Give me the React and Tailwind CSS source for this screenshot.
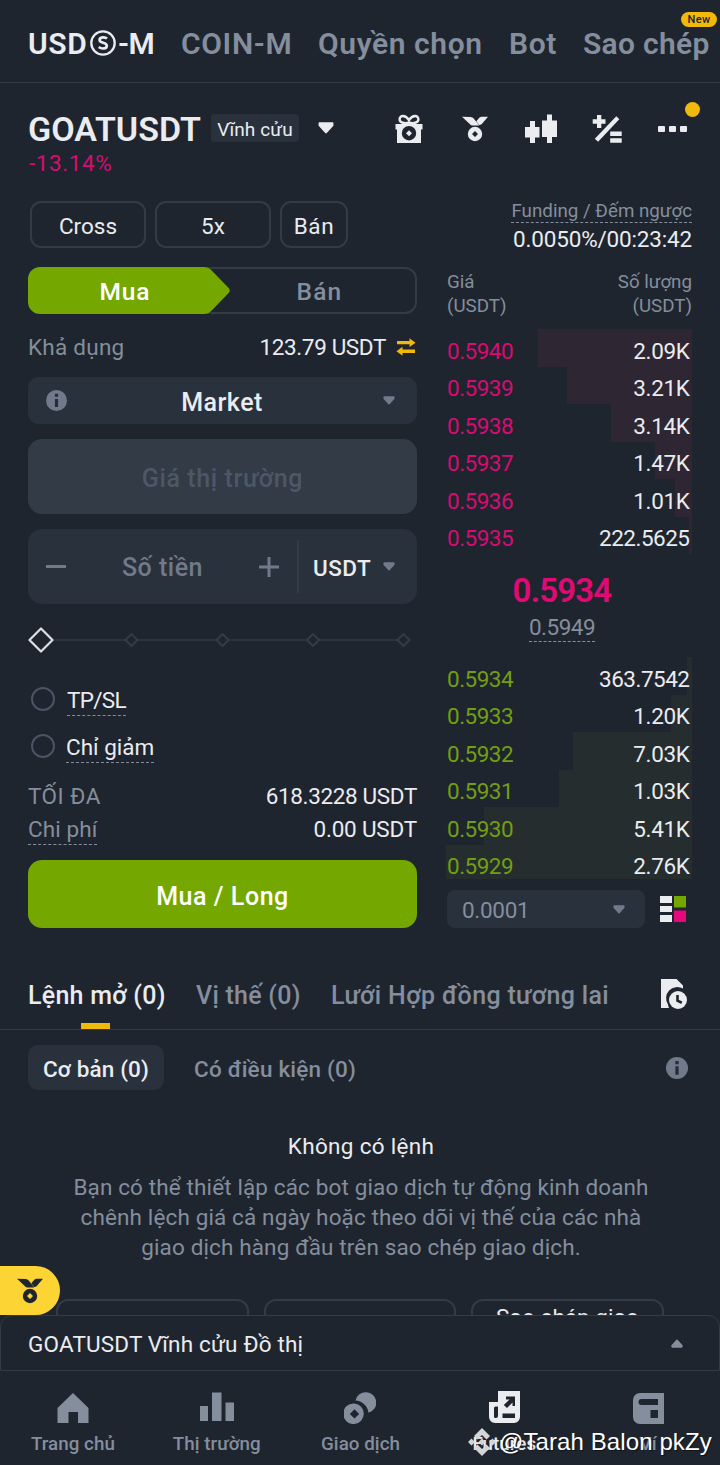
import React from "react";

const asks = [
  { price: "0.5940", size: "2.09K", depth: 154 },
  { price: "0.5939", size: "3.21K", depth: 125 },
  { price: "0.5938", size: "3.14K", depth: 81 },
  { price: "0.5937", size: "1.47K", depth: 37 },
  { price: "0.5936", size: "1.01K", depth: 17 },
  { price: "0.5935", size: "222.5625", depth: 3 },
];

const bids = [
  { price: "0.5934", size: "363.7542", depth: 5 },
  { price: "0.5933", size: "1.20K", depth: 21 },
  { price: "0.5932", size: "7.03K", depth: 119 },
  { price: "0.5931", size: "1.03K", depth: 133 },
  { price: "0.5930", size: "5.41K", depth: 208 },
  { price: "0.5929", size: "2.76K", depth: 246 },
];

function Caret({ className }) {
  return (
    <svg viewBox="0 0 16 12" className={className} fill="currentColor">
      <path d="M.6 1.2C.6.6 1 .2 1.600 .2h12.800c.6 0 1 .4 1 1v2.500L8.800 11a1.100 1.100 0 0 1-1.600 0L.6 3.700z" />
    </svg>
  );
}

function InfoIcon({ className }) {
  return (
    <svg viewBox="0 0 24 24" className={className}>
      <circle cx="12" cy="12" r="12" fill="#707a8a" />
      <path d="M10.200 4.300h3.600v3.500h-3.600zM10.200 10.200h3.600v9.200h-3.600z" fill="#262d39" />
    </svg>
  );
}

function GiftIcon() {
  return (
    <svg viewBox="0 0 28 30" className="h-[30px] w-7" fill="#eaecef">
      <path d="M14 8.500C10 9.800 4.600 9 4.600 5.200 4.600 1 10.500.6 14 6.200 17.500.6 23.400 1 23.400 5.200 23.400 9 18 9.800 14 8.500z" fill="none" stroke="#eaecef" strokeWidth="2.400" />
      <path fillRule="evenodd" d="M.5 10h27v5.500H26V29H2V15.500H.5zM14 12a7.200 7.200 0 1 0 0 14.400 7.200 7.200 0 0 0 0-14.400z" />
      <path d="M14 16.200l3 3-3 3-3-3z" />
    </svg>
  );
}

function MedalIcon({ className }) {
  return (
    <svg viewBox="0 0 28 26" className={className} fill="currentColor">
      <path d="M1 .8l8.500.2c1.500.1 2.500.7 3.400 1.800l5.400 6.600h-6.900c-1 0-1.800-.4-2.400-1.200z" />
      <path d="M27 .8l-6 6.900c-.7.8-1.700 1.300-2.900 1.200L15.300 5.300l2.600-3c.8-1 1.900-1.500 3.100-1.500z" />
      <path fillRule="evenodd" d="M14 10.800a7.200 7.200 0 1 0 0 14.400 7.200 7.200 0 0 0 0-14.400zM14 15l3 3-3 3-3-3z" />
    </svg>
  );
}

function CandleIcon() {
  return (
    <svg viewBox="0 0 32 30" className="h-[30px] w-8" fill="#eaecef">
      <path d="M5 7h5v6h4.500v10.500H10V29H5v-5.500H0V13h5zM22 .5h5v6h5V23h-5v6h-5v-6h-5V6.500h5z" />
    </svg>
  );
}

function PercentIcon() {
  return (
    <svg viewBox="0 0 30 30" className="h-[30px] w-[30px]" fill="#eaecef">
      <path d="M5 1h4.300v4.300h4.200v4.400H9.300V14H5V9.700H.7V5.300H5zM24.300 2.300l3 3L6.100 27.800l-3.300-3zM18.200 17.600h11.500v4.300H18.200zM18.200 24.300h11.500v4.400H18.200z" />
    </svg>
  );
}

function BookIcon() {
  return (
    <svg viewBox="0 0 26 26" className="h-[26px] w-[26px]">
      <path d="M0 0h12v7H0zM0 10h12v6H0zM0 19h12v7H0z" fill="#eaecef" />
      <path d="M14 0h12v11.500H14z" fill="#74a800" />
      <path d="M14 14.500h12V26H14z" fill="#e8077d" />
    </svg>
  );
}

function HistoryIcon() {
  return (
    <svg viewBox="0 0 27 30" className="h-[30px] w-[27px]">
      <path d="M0 0h15.500L22 6.500V9.600A11.200 11.200 0 0 0 7 25.500c.2 1.300.5 2.400 1 3.500H0z" fill="#eaecef" />
      <circle cx="17" cy="21" r="9" fill="#eaecef" />
      <path d="M16.500 16v5.700l4.300 2" fill="none" stroke="#1f252f" strokeWidth="2.600" />
    </svg>
  );
}

function Outline({ children, className }) {
  return (
    <div className={`flex h-[47px] items-center justify-center rounded-[11px] border-2 border-[#333b47] pt-1 text-[22.5px] ${className}`}>
      {children}
    </div>
  );
}

function BookRow({ row, side }) {
  const ask = side === "ask";
  return (
    <div className="grid h-[37.5px] grid-rows-[37.5px]">
      <div className="flex justify-end [grid-area:1/1]">
        <div className={ask ? "bg-[#2f2633]" : "bg-[#252d2e]"} style={{ width: row.depth }} />
      </div>
      <div className="flex h-[44px] items-center justify-between pl-px pr-[2.5px] text-[22.5px] tracking-[-0.5px] [grid-area:1/1]">
        <span className={ask ? "text-[#d60c72]" : "text-[#729f11]"}>{row.price}</span>
        <span className={row.size.length > 5 ? "" : "tracking-[-0.35px]"}>{row.size}</span>
      </div>
    </div>
  );
}

function Header() {
  return (
    <header className="flex h-[83px] border-b border-[#333b47] pl-7 pt-[25px] text-[30px] font-semibold leading-[38px] text-[#848e9c]">
      <div className="flex h-[38px] w-[153px] items-center tracking-[0.6px] text-[#eaecef]">
        <span className="w-[62px]">USD</span>
        <svg viewBox="0 0 26 26" className="-mt-0.5 h-[26px] w-[26px]">
          <circle cx="13" cy="13" r="11.700" fill="none" stroke="#eaecef" strokeWidth="2.300" />
          <path d="M17 8.600C15 6.800 9.600 6.700 9.600 9.900c0 3.600 7.200 2 7.200 5.800 0 3.500-5.500 3.400-8 1.300" fill="none" stroke="#eaecef" strokeWidth="2.700" />
        </svg>
        <span className="ml-0.5 tracking-[-0.5px]">-M</span>
      </div>
      <span className="w-[137px] tracking-[0.65px]">COIN-M</span>
      <span className="w-[191px] tracking-[0.6px]">Quyền chọn</span>
      <span className="w-[74px] tracking-[0.6px]">Bot</span>
      <div className="relative tracking-[0.3px]">
        Sao chép
        <span className="absolute left-[98px] top-[-13px] h-[15px] w-9 rounded-full bg-[#f0b90b] text-center text-[11px] font-medium leading-[15px] tracking-[0.4px] text-[#202630]">
          New
        </span>
      </div>
    </header>
  );
}

function SymbolBar() {
  return (
    <section className="h-[118px] pl-7 pt-[26px]">
      <div className="flex h-10 items-center">
        <h1 className="w-[183px] text-[34px] font-semibold leading-10">GOATUSDT</h1>
        <span className="-mt-0.5 flex h-7 w-[88px] items-center justify-center rounded bg-[#29313d] pt-0.5 text-[19px] tracking-[0.1px]">Vĩnh cửu</span>
        <Caret className="-mt-0.5 ml-[19px] h-3 w-4" />
        <div className="ml-[61px] flex items-center">
          <GiftIcon />
          <MedalIcon className="ml-[38px] h-[26px] w-7" />
          <div className="ml-9"><CandleIcon /></div>
          <div className="ml-[35px]"><PercentIcon /></div>
          <div className="relative ml-9 flex gap-1">
            <i className="h-1.5 w-[7px] rounded-[1px] bg-[#eaecef]" />
            <i className="h-1.5 w-[7px] rounded-[1px] bg-[#eaecef]" />
            <i className="h-1.5 w-[7px] rounded-[1px] bg-[#eaecef]" />
            <i className="absolute -top-6 left-[27px] h-[15px] w-[15px] rounded-full bg-[#f0b90b]" />
          </div>
        </div>
      </div>
      <p className="pl-px text-[22.5px] leading-7 tracking-[0.6px] text-[#d60c72]">-13.14%</p>
    </section>
  );
}

function SizeSlider() {
  return (
    <svg viewBox="0 0 389 28" className="mt-[22px] h-7 w-[389px]" fill="#1f252f">
      <path d="M26 14h350" stroke="#2b333f" strokeWidth="2" />
      <path d="M13 2.500L24.500 14 13 25.500 1.500 14z" stroke="#dcdfe3" strokeWidth="2.200" strokeLinejoin="round" />
      <g stroke="#333b47" strokeWidth="2" strokeLinejoin="round">
        <path d="M103.500 8l6 6-6 6-6-6z" />
        <path d="M194.500 8l6 6-6 6-6-6z" />
        <path d="M285 8l6 6-6 6-6-6z" />
        <path d="M375.500 8l6 6-6 6-6-6z" />
      </g>
    </svg>
  );
}

function OrderForm() {
  return (
    <div className="w-[389px]">
      <div className="flex gap-[9px] pl-0.5">
        <Outline className="w-[116px]">Cross</Outline>
        <Outline className="w-[116px]">5x</Outline>
        <Outline className="w-[68px] tracking-[0.6px]">Bán</Outline>
      </div>
      <div className="mt-[19px] grid h-[47px] grid-cols-[194px_195px] grid-rows-[47px] text-center text-[24.5px] font-medium">
        <div className="relative z-10">
          <svg viewBox="0 0 202 47" className="absolute left-0 top-0 h-[47px] w-[202px] max-w-none" fill="#74a800">
            <path d="M12 0h164c3 0 5.200 1 7.200 3l17 17.500c2 2 2 4 0 6l-17 17.500c-2 2-4.200 3-7.200 3H12A12 12 0 0 1 0 35V12A12 12 0 0 1 12 0z" />
          </svg>
          <span className="relative leading-[50px] tracking-[0.9px] text-white">Mua</span>
        </div>
        <div className="-ml-4 rounded-r-[12px] border-2 border-l-0 border-[#333b47] pl-[18px] leading-[46px] tracking-[1.2px] text-[#848e9c]">
          Bán
        </div>
      </div>
      <div className="mt-[15px] flex h-9 items-center justify-between text-[22.5px]">
        <span className="tracking-[0.25px] text-[#848e9c]">Khả dụng</span>
        <span className="flex items-center tracking-[-0.37px]">
          123.79 USDT
          <svg viewBox="0 0 20 18" className="ml-[10px] mr-px h-[18px] w-5" fill="#f0b90b">
            <path d="M1 3h12.500V.3L19.500 4.700 13.500 9V6.300H1zM19 11.500H6.500V8.800L.5 13.200l6 4.500V15H19z" />
          </svg>
        </span>
      </div>
      <div className="mt-3 flex h-[47px] items-center justify-between rounded-[11px] bg-[#29313d] pl-[18px] pr-[22px] text-[25px] font-medium tracking-[0.5px]">
        <InfoIcon className="h-[21px] w-[21px]" />
        <span className="pr-1.5 pt-[3px]">Market</span>
        <Caret className="h-[9px] w-3 text-[#707a8a]" />
      </div>
      <div className="mt-[15px] h-[75px] rounded-[14px] bg-[#333b47] pt-0.5 text-center text-[25px] font-medium leading-[75px] tracking-[0.6px] text-[#4d5766]">
        Giá thị trường
      </div>
      <div className="mt-[15px] flex h-[75px] items-center rounded-[14px] bg-[#29313d] pl-[18px] text-[25px] font-medium text-[#707a8a]">
        <i className="h-[3px] w-5 bg-[#707a8a]" />
        <span className="w-[193px] pt-0.5 text-center tracking-[0.5px]">Số tiền</span>
        <svg viewBox="0 0 20 20" className="h-5 w-5">
          <path d="M10 0v20M0 10h20" stroke="#707a8a" strokeWidth="3" />
        </svg>
        <i className="ml-[18px] h-[53px] w-0.5 bg-[#333b47]" />
        <span className="ml-[14px] w-[70px] pt-[3px] text-[22.5px] tracking-[0.5px] text-[#eaecef]">USDT</span>
        <Caret className="h-[9px] w-3" />
      </div>
      <SizeSlider />
      <div className="mt-[23px] flex h-[47px] items-center gap-3 pl-[3px] text-[22.5px]">
        <i className="-mt-1 h-6 w-6 rounded-full border-2 border-[#4a5464]" />
        <span className="border-b border-dashed border-[#848e9c] leading-[30px] tracking-[-0.7px]">TP/SL</span>
      </div>
      <div className="flex h-[47px] items-center gap-[11px] pl-[3px] text-[22.5px]">
        <i className="-mt-1 h-6 w-6 rounded-full border-2 border-[#4a5464]" />
        <span className="border-b border-dashed border-[#848e9c] leading-[30px]">Chỉ giảm</span>
      </div>
      <div className="mt-[9px] flex h-[33px] items-center justify-between text-[22.5px]">
        <span className="tracking-[0.5px] text-[#848e9c]">TỐI ĐA</span>
        <span className="tracking-[-0.35px]">618.3228 USDT</span>
      </div>
      <div className="flex h-[33px] items-center justify-between text-[22.5px]">
        <span className="border-b border-dashed border-[#848e9c] leading-[30px] tracking-[0.1px] text-[#848e9c]">Chi phí</span>
        <span className="tracking-[-0.2px]">0.00 USDT</span>
      </div>
      <button className="mt-[14px] block h-[68px] w-full rounded-[14px] bg-[#74a800] pt-1 text-center text-[25px] font-medium tracking-[0.55px] text-white">
        Mua / Long
      </button>
    </div>
  );
}

function OrderBook() {
  return (
    <div className="w-[246px]">
      <div className="flex flex-col items-end">
        <span className="border-b border-dashed border-[#848e9c] pb-px text-[18.75px] leading-[20px] text-[#848e9c]">Funding / Đếm ngược</span>
        <span className="mt-0.5 text-[22.5px] leading-7 tracking-[-0.17px]">0.0050%/00:23:42</span>
      </div>
      <div className="mt-[17px] flex justify-between pl-px text-[18.75px] leading-6 text-[#848e9c]">
        <div>Giá<br />(USDT)</div>
        <div className="text-right">Số lượng<br />(USDT)</div>
      </div>
      <div className="mt-[11px]">
        {asks.map((r) => <BookRow key={r.price} row={r} side="ask" />)}
      </div>
      <div className="flex h-[103px] flex-col items-center pr-[14px] pt-[17px]">
        <span className="text-[33px] font-semibold leading-10 tracking-[-0.8px] text-[#e00a74]">0.5934</span>
        <span className="mt-0.5 border-b border-dashed border-[#848e9c] text-[22.5px] leading-[28px] tracking-[-0.5px] text-[#848e9c]">0.5949</span>
      </div>
      <div className="h-[222px] overflow-hidden">
        {bids.map((r) => <BookRow key={r.price} row={r} side="bid" />)}
      </div>
      <div className="mt-[11px] flex items-center pl-px">
        <div className="flex h-[38px] w-[198px] items-center justify-between rounded-[8px] bg-[#29313d] pl-[15px] pr-5 text-[22.5px] tracking-[-0.3px] text-[#848e9c]">
          <span className="pt-0.5">0.0001</span>
          <Caret className="h-[9px] w-3 text-[#707a8a]" />
        </div>
        <div className="ml-[15px]"><BookIcon /></div>
      </div>
    </div>
  );
}

function Orders() {
  return (
    <section>
      <div className="flex h-[68px] border-b border-[#333b47] pl-7 text-[25px] font-medium leading-[68px] text-[#848e9c]">
        <div className="relative w-[168px] tracking-[0.25px] text-[#eaecef]">
          Lệnh mở (0)
          <i className="absolute bottom-0 left-[53px] h-1.5 w-[29px] bg-[#f0b90b]" />
        </div>
        <span className="w-[135px] tracking-[0.25px]">Vị thế (0)</span>
        <span className="w-[330px] tracking-[0.34px]">Lưới Hợp đồng tương lai</span>
        <div className="pt-[17px]"><HistoryIcon /></div>
      </div>
      <div className="mt-[15px] flex h-[45px] items-center pl-7 text-[22.5px] font-medium">
        <span className="h-[45px] w-[136px] rounded-[10px] bg-[#29313d] text-center leading-[48px] tracking-[0.14px]">Cơ bản (0)</span>
        <span className="ml-[30px] w-[472px] pt-[3px] tracking-[0.2px] text-[#848e9c]">Có điều kiện (0)</span>
        <InfoIcon className="h-[22px] w-[22px]" />
      </div>
      <div className="pl-0.5 pt-[41px] text-center text-[22.5px] leading-[30px] tracking-[0.13px]">
        <p className="tracking-[0.3px]">Không có lệnh</p>
        <p className="mt-[11px] text-[#848e9c]">
          Bạn có thể thiết lập các bot giao dịch tự động kinh doanh<br />
          chênh lệch giá cả ngày hoặc theo dõi vị thế của các nhà<br />
          giao dịch hàng đầu trên sao chép giao dịch.
        </p>
      </div>
      <div className="mt-[37px] flex h-4 gap-[15px] overflow-hidden pl-14">
        <div className="h-20 w-[193px] shrink-0 rounded-[12px] border-2 border-[#333b47]" />
        <div className="h-20 w-[192px] shrink-0 rounded-[12px] border-2 border-[#333b47]" />
        <div className="h-20 w-[193px] shrink-0 rounded-[12px] border-2 border-[#333b47] pt-[3px] text-center text-[22.5px] leading-[27px] tracking-[0.1px]">Sao chép giao</div>
      </div>
    </section>
  );
}

function NavItem({ label, active, children }) {
  return (
    <div className={`flex w-36 flex-col items-center ${active ? "text-[#eaecef]" : "text-[#848e9c]"}`}>
      <div className="flex h-[38px] items-center">{children}</div>
      <span className="mt-1.5 text-[18.75px] font-medium leading-6 tracking-[0.05px]">{label}</span>
    </div>
  );
}

function BottomNav() {
  return (
    <nav className="relative flex h-[94px] pl-px pt-[17px]">
      <NavItem label="Trang chủ">
        <svg viewBox="0 0 32 32" className="mt-0.5 h-8 w-8" fill="currentColor">
          <path d="M16 1l15.500 15v15H21V20h-9.500v11H.5V16z" />
        </svg>
      </NavItem>
      <NavItem label="Thị trường">
        <svg viewBox="0 0 34 30" className="h-[30px] w-[34px]" fill="currentColor">
          <path d="M0 14h8v15H0zM12 .5h9.500V29H12zM25.500 10.500H34V29h-8.500z" />
        </svg>
      </NavItem>
      <NavItem label="Giao dịch">
        <svg viewBox="0 0 32 32" className="mt-0.5 h-8 w-8" fill="currentColor">
          <path d="M11.500 8.500A10.500 10.500 0 1 1 24.500 20.800 14 14 0 0 0 11.500 8.500z" />
          <path fillRule="evenodd" d="M10.500 11.500a10.300 10.300 0 1 0 0 20.500 10.300 10.300 0 0 0 0-20.500zM10.500 17.300l4.700 4.600-4.700 4.600-4.700-4.600z" />
        </svg>
      </NavItem>
      <NavItem label="Futures" active>
        <svg viewBox="0 0 31 32" className="h-8 w-[31px]" fill="currentColor">
          <path fillRule="evenodd" d="M9 0h22v26a6 6 0 0 1-6 6H6a6 6 0 0 1-6-6V11h9zM9 15.500H6.500A1.500 1.500 0 0 0 5 17v8.500c0 1 .5 1.500 2 1.500a2 2 0 0 0 2-2zM13.500 22.500V27H26v-4.500zM17 5.500v3h3.500L14.800 14l3.200 3 5.500-5.600V15H26V5.500z" />
        </svg>
      </NavItem>
      <NavItem label="Ví">
        <svg viewBox="0 0 31 31" className="mt-0.5 h-[31px] w-[31px]" fill="currentColor">
          <path fillRule="evenodd" d="M7 0h24v31H7a7 7 0 0 1-7-7V7a7 7 0 0 1 7-7zM8.500 6a3 3 0 0 0 0 6H25V6zM17.500 17v8H25v-8z" />
        </svg>
      </NavItem>
      <div className="absolute left-[468px] top-[56px] flex items-center whitespace-nowrap font-['Liberation_Sans',sans-serif] text-[24px] leading-[30px] tracking-[0.1px] text-white">
        <svg viewBox="0 0 28 28" className="h-7 w-7" fill="#d3d5d8">
          <path d="M14 0l8 8-3.500 3.500L14 7l-4.500 4.500L6 8zM14 28l-8-8 3.500-3.500L14 21l4.500-4.500L22 20zM14 10.500l3.500 3.500-3.500 3.500-3.500-3.500zM3.500 10.500L7 14l-3.500 3.500L0 14zM24.500 10.500L28 14l-3.500 3.500L21 14z" />
        </svg>
        <span className="ml-[3px] [text-shadow:1px_1px_1px_#0008]">@Tarah Balon pkZy</span>
      </div>
    </nav>
  );
}

export default function App() {
  return (
    <div className="relative h-[1465px] w-[720px] overflow-hidden whitespace-nowrap bg-[#1f252f] font-['Roboto','Noto_Sans',sans-serif] leading-none text-[#eaecef]">
      <Header />
      <SymbolBar />
      <main className="flex h-[761px] pl-7">
        <OrderForm />
        <div className="ml-[29px]"><OrderBook /></div>
      </main>
      <Orders />
      <div className="absolute left-0 top-[1266px] flex h-[49px] w-[60px] items-center rounded-r-full bg-[#fcd535] pl-4 text-[#202630]">
        <MedalIcon className="h-[26px] w-7" />
      </div>
      <div className="flex h-14 items-center justify-between rounded-t-[12px] border border-[#333b47] pl-[27px] pr-[35px] text-[22.5px] tracking-[0.18px]">
        <span className="pt-0.5">GOATUSDT Vĩnh cửu Đồ thị</span>
        <Caret className="h-[9px] w-3.5 rotate-180 text-[#848e9c]" />
      </div>
      <BottomNav />
    </div>
  );
}
